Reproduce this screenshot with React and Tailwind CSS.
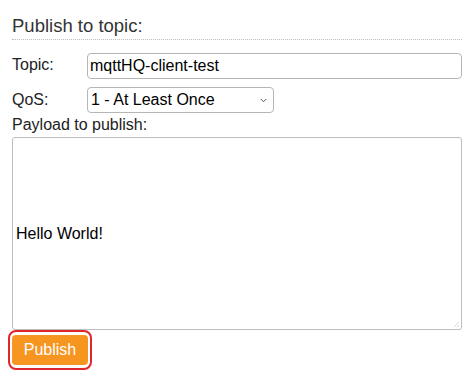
import React from 'react';

const App = () => {
  return (
    <div className="w-[474px] h-[378px] bg-white px-[12px] overflow-hidden" style={{ fontFamily: '"Liberation Sans", Arial, sans-serif' }}>
      {/* heading */}
      <h2 className="pt-[15px] pb-[2px] text-[18.5px] leading-[22px] text-[#333] border-b border-dotted border-[#bdbdbd]">
        Publish to topic:
      </h2>

      {/* topic */}
      <div className="flex mt-[13px]">
        <div className="w-[75px] pt-[3px] text-[16px] leading-[18px] text-[#222]">Topic:</div>
        <input
          defaultValue="mqttHQ-client-test"
          className="flex-1 h-[26px] border border-[#b5b5b5] rounded-[4px] px-[2px] text-[16px] text-black outline-none"
        />
      </div>

      {/* qos */}
      <div className="flex mt-[8px]">
        <div className="w-[75px] pt-[4px] text-[16px] leading-[18px] text-[#222]">QoS:</div>
        <div className="relative w-[187px] h-[26px] border border-[#b5b5b5] rounded-[4px] flex items-center px-[3px] text-[16px] text-black">
          1 - At Least Once
          <svg className="absolute right-[6px] top-[10px]" width="7" height="5" viewBox="0 0 7 5" fill="none">
            <path d="M0.8 1 L3.5 3.8 L6.2 1" stroke="#555" strokeWidth="1" />
          </svg>
        </div>
      </div>

      {/* payload */}
      <div className="mt-[3px] text-[16px] leading-[18px] text-[#222]">Payload to publish:</div>
      <div className="relative mt-[3px] h-[193px] border border-[#bdbdbd] rounded-[3px] flex items-center px-[3px] text-[16px] text-black">
        Hello World!
        <svg className="absolute right-[1px] bottom-[1px]" width="7" height="7" viewBox="0 0 7 7">
          <path d="M6 1 L1 6 M6 4 L4 6" stroke="#ccc" strokeWidth="0.8" />
        </svg>
      </div>

      {/* button with highlight */}
      <div className="-ml-[4px] inline-block border-2 border-[#e0262a] rounded-[8px] px-[2px] py-[3px]">
        <button className="w-[76px] h-[30px] rounded-[4px] bg-[#f6951f] text-white text-[16px] leading-[18px]">
          Publish
        </button>
      </div>
    </div>
  );
};

export default App;
